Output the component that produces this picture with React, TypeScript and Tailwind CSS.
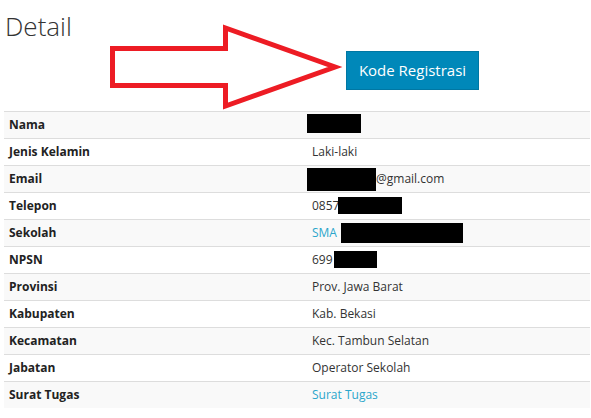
import React from "react";

const Box = ({ w, h, cls = "" }: { w: number; h: number; cls?: string }) => (
  <span className={`inline-block bg-black ${cls}`} style={{ width: w, height: h }} />
);

type Row = { label: string; value: React.ReactNode };

const rows: Row[] = [
  {
    label: "Nama",
    value: <Box w={54} h={19} cls="ml-[-5px] self-start mt-[2px]" />,
  },
  { label: "Jenis Kelamin", value: <span>Laki-laki</span> },
  {
    label: "Email",
    value: (
      <>
        <Box w={69} h={23} cls="ml-[-5px] self-start mt-[2px]" />
        <span>@gmail.com</span>
      </>
    ),
  },
  {
    label: "Telepon",
    value: (
      <>
        <span>0857</span>
        <Box w={64} h={17} cls="ml-[-1px] self-start mt-[4px]" />
      </>
    ),
  },
  {
    label: "Sekolah",
    value: (
      <>
        <span className="text-[#2ba6cb]">SMA</span>
        <Box w={122} h={20} cls="ml-[4px] self-start mt-[3px]" />
      </>
    ),
  },
  {
    label: "NPSN",
    value: (
      <>
        <span>699</span>
        <Box w={43} h={17} cls="ml-[1px] self-start mt-[4px]" />
      </>
    ),
  },
  { label: "Provinsi", value: <span>Prov. Jawa Barat</span> },
  { label: "Kabupaten", value: <span>Kab. Bekasi</span> },
  { label: "Kecamatan", value: <span>Kec. Tambun Selatan</span> },
  { label: "Jabatan", value: <span>Operator Sekolah</span> },
  { label: "Surat Tugas", value: <span className="text-[#2ba6cb]">Surat Tugas</span> },
];

export default function App() {
  return (
    <div
      className="relative w-[591px] h-[418px] bg-white overflow-hidden text-[#222]"
      style={{ fontFamily: '"Open Sans", "Liberation Sans", sans-serif' }}
    >
      <div className="pl-[4px] pr-[1px]">
        <h1 className="mt-[8px] text-[26px] leading-[36px] font-light text-[#333] pl-[1px]">Detail</h1>
        <div className="mt-[7px] flex">
          <button className="ml-[342px] h-[39px] w-[133px] bg-[#0088b9] border border-[#0077a3] text-white text-[15px] leading-[37px] text-center">
            Kode Registrasi
          </button>
        </div>
        <div className="mt-[21px]">
          {rows.map((r, i) => (
            <div
              key={r.label}
              className={`grid grid-cols-[303px_1fr] h-[27px] border-t border-[#dddddd] text-[12px] leading-[26px] ${
                i % 2 === 0 ? "bg-[#f9f9f9]" : "bg-white"
              }`}
            >
              <div className="pl-[5px] font-bold text-[#222]">{r.label}</div>
              <div className="pl-[5px] flex items-center text-[#333] whitespace-pre">{r.value}</div>
            </div>
          ))}
        </div>
      </div>
      <svg className="absolute left-0 top-0" width="591" height="418" viewBox="0 0 591 418">
        <polygon
          points="112.5,48.5 225.5,48.5 225.5,28 335,67 225.5,106 225.5,85.5 112.5,85.5"
          fill="none"
          stroke="#ed1c24"
          strokeWidth="5"
          strokeLinejoin="miter"
        />
      </svg>
    </div>
  );
}
